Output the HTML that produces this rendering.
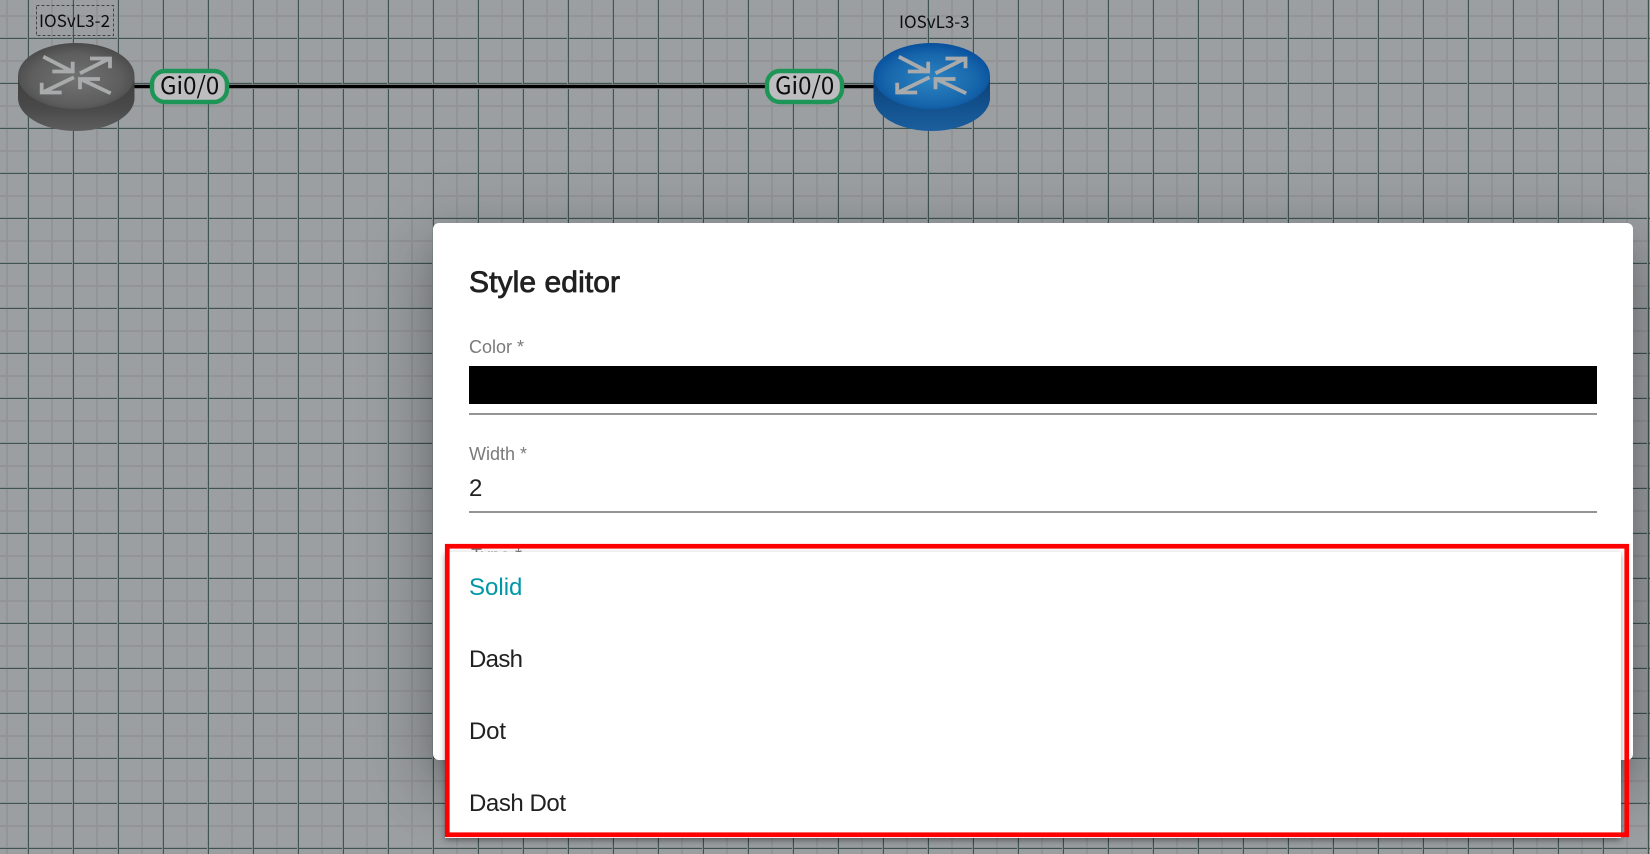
<!DOCTYPE html>
<html>
<head>
<meta charset="utf-8">
<style>
html,body{margin:0;padding:0;width:1650px;height:854px;overflow:hidden;background:#9b9fa2}
#bg{position:absolute;left:0;top:0;width:1650px;height:854px;background-color:#9b9fa2;
background-image:
linear-gradient(to right,#8b9293 1px,#405452 1px,#405452 2px,transparent 2px),
linear-gradient(to bottom,#8b9293 1px,#405452 1px,#405452 2px,transparent 2px),
linear-gradient(to right,#929496 2px,transparent 2px),
linear-gradient(to bottom,#929496 2px,transparent 2px);
background-size:45px 45px;
background-position:27px 0,0 37px,6px 0,0 15px}
#nodes{position:absolute;left:0;top:0}
#dialog{position:absolute;left:433px;top:223px;width:1200px;height:537px;background:#fff;border-radius:6px;
box-shadow:0 16px 22px -10px rgba(0,0,0,.22),0 36px 57px 4px rgba(0,0,0,.16),0 14px 69px 12px rgba(0,0,0,.14)}
#black{position:absolute;left:469px;top:366px;width:1128px;height:38px;background:#000}
.ul{position:absolute;left:469px;width:1128px;height:2px;background:#949494}
#menu{position:absolute;left:445px;top:552px;width:1176px;height:286px;background:#fff;
box-shadow:0 3px 5px -2px rgba(0,0,0,.3),0 2px 6px 1px rgba(0,0,0,.2)}
.t{position:absolute;left:0;top:0}
</style>
</head>
<body>
<div id="bg"></div>
<svg id="nodes" width="1650" height="854" viewBox="0 0 1650 854">
<defs>
<radialGradient id="gt" cx="50%" cy="55%" r="55%"><stop offset="0" stop-color="#727272"/><stop offset=".7" stop-color="#5e5e5e"/><stop offset="1" stop-color="#4a4a4a"/></radialGradient>
<linearGradient id="gs" x1="0" y1="0" x2="0" y2="1"><stop offset="0" stop-color="#3e3e3e"/><stop offset=".6" stop-color="#4a4a4a"/><stop offset="1" stop-color="#5e5e5e"/></linearGradient>
<radialGradient id="bt" cx="50%" cy="55%" r="55%"><stop offset="0" stop-color="#2d84c0"/><stop offset=".7" stop-color="#1766ac"/><stop offset="1" stop-color="#084f9c"/></radialGradient>
<linearGradient id="bs" x1="0" y1="0" x2="0" y2="1"><stop offset="0" stop-color="#0d3f74"/><stop offset=".6" stop-color="#135390"/><stop offset="1" stop-color="#1c5f9e"/></linearGradient>
<g id="arrows" fill="none" stroke="#a8aaab" stroke-width="3.8">
<path d="M43.300 56.700L72 71.500M52.300 71.500H72.700V61.700"/>
<path d="M80 73.300L109.500 58.500M90 58.500H110V68.300"/>
<path d="M74 77.300L42.500 92.500M61.700 92.500H41.700V82.700"/>
<path d="M110.700 93.300L80.500 79M100 79H80V89.300"/>
</g>
</defs>
<line x1="134" y1="86.500" x2="880" y2="86.500" stroke="#000" stroke-width="3"/>
<line x1="134" y1="84.500" x2="880" y2="84.500" stroke="#777" stroke-width="1"/>
<line x1="134" y1="88.500" x2="880" y2="88.500" stroke="#777" stroke-width="1"/>
<g>
<path d="M18 76V98C18 116 44 131 76 131S134.500 116 134.500 98V76Z" fill="url(#gs)"/>
<ellipse cx="76.250" cy="76" rx="58.250" ry="33" fill="url(#gt)"/>
<use href="#arrows"/>
</g>
<g transform="translate(855.500 0)">
<path d="M18 76V98C18 116 44 131 76 131S134.500 116 134.500 98V76Z" fill="url(#bs)"/>
<ellipse cx="76.250" cy="76" rx="58.250" ry="33" fill="url(#bt)"/>
<use href="#arrows"/>
</g>
<rect x="152" y="71" width="75" height="31" rx="13" fill="#bdbdbf" stroke="#1d9556" stroke-width="4.400"/>
<rect x="767" y="71" width="75" height="31" rx="13" fill="#bdbdbf" stroke="#1d9556" stroke-width="4.400"/>
<rect x="36.500" y="5.500" width="77" height="30" fill="none" stroke="#444" stroke-width="1" stroke-dasharray="3 2"/>
<g font-family="'Noto Sans CJK JP','Liberation Sans',sans-serif" fill="#0c0c0c">
<text x="160" y="94" font-size="24">Gi0/0</text>
<text x="775" y="94" font-size="24">Gi0/0</text>
<text x="39" y="27" font-size="17" textLength="71">IOSvL3-2</text>
<text x="899" y="28" font-size="17">IOSvL3-3</text>
</g>
</svg>
<div id="dialog"></div>
<div id="black"></div>
<div class="ul" style="top:413px"></div>
<div class="ul" style="top:511px"></div>
<svg class="t" width="1650" height="854" viewBox="0 0 1650 854" font-family="'Liberation Sans',Arial,sans-serif">
<text x="469" y="292" font-size="30" fill="#212121" stroke="#212121" stroke-width=".8" textLength="151">Style editor</text>
<text x="469" y="353" font-size="18" fill="#7a7a7a" textLength="55">Color *</text>
<text x="469" y="460" font-size="18" fill="#7a7a7a" textLength="58">Width *</text>
<text x="469" y="496" font-size="24" fill="#212121">2</text>
<text x="471" y="561.500" font-size="18" fill="#7a7a7a">Type *</text>
</svg>
<div id="menu"></div>
<svg class="t" width="1650" height="854" viewBox="0 0 1650 854" font-family="'Liberation Sans',Arial,sans-serif" font-size="24">
<text x="469" y="595" fill="#0097a7">Solid</text>
<text x="469" y="667" fill="#212121" textLength="54">Dash</text>
<text x="469" y="739" fill="#212121" textLength="37">Dot</text>
<text x="469" y="811" fill="#212121" textLength="97">Dash Dot</text>
<rect x="447.250" y="546.250" width="1179.500" height="288.500" fill="none" stroke="#f00" stroke-width="4.700"/>
</svg>
</body>
</html>
